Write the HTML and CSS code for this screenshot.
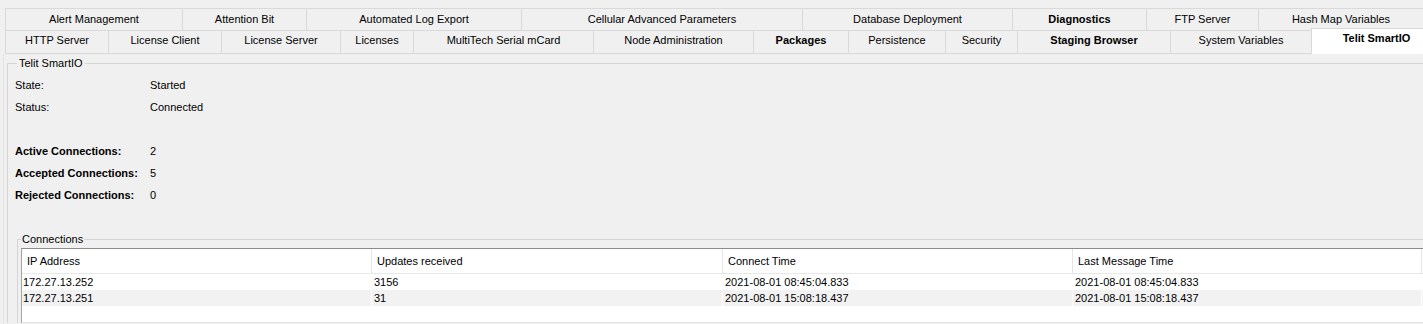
FILE: index.html
```
<!DOCTYPE html>
<html>
<head>
<meta charset="utf-8">
<link rel="stylesheet" href="styles.css">
</head>
<body>
<div class="tabs">
  <div class="tabrow row1">
    <div class="tab">Alert Management</div>
    <div class="tab">Attention Bit</div>
    <div class="tab">Automated Log Export</div>
    <div class="tab">Cellular Advanced Parameters</div>
    <div class="tab">Database Deployment</div>
    <div class="tab bold">Diagnostics</div>
    <div class="tab">FTP Server</div>
    <div class="tab">Hash Map Variables</div>
  </div>
  <div class="tabrow row2">
    <div class="tab">HTTP Server</div>
    <div class="tab">License Client</div>
    <div class="tab">License Server</div>
    <div class="tab">Licenses</div>
    <div class="tab">MultiTech Serial mCard</div>
    <div class="tab">Node Administration</div>
    <div class="tab bold">Packages</div>
    <div class="tab">Persistence</div>
    <div class="tab">Security</div>
    <div class="tab bold">Staging Browser</div>
    <div class="tab">System Variables</div>
    <div class="tab bold selected">Telit SmartIO</div>
  </div>
</div>
<div class="panel">
  <fieldset class="group main">
    <legend>Telit SmartIO</legend>
    <div class="props">
      <div class="lbl">State:</div><div class="val">Started</div>
      <div class="lbl">Status:</div><div class="val">Connected</div>
      <div class="lbl"></div><div class="val"></div>
      <div class="lbl b">Active Connections:</div><div class="val">2</div>
      <div class="lbl b">Accepted Connections:</div><div class="val">5</div>
      <div class="lbl b">Rejected Connections:</div><div class="val">0</div>
    </div>
    <fieldset class="group conns">
      <legend>Connections</legend>
      <div class="table">
        <div class="trow head">
          <div class="cell">IP Address</div>
          <div class="cell">Updates received</div>
          <div class="cell">Connect Time</div>
          <div class="cell">Last Message Time</div>
        </div>
        <div class="trow">
          <div class="cell">172.27.13.252</div>
          <div class="cell">3156</div>
          <div class="cell">2021-08-01 08:45:04.833</div>
          <div class="cell">2021-08-01 08:45:04.833</div>
        </div>
        <div class="trow alt">
          <div class="cell">172.27.13.251</div>
          <div class="cell">31</div>
          <div class="cell">2021-08-01 15:08:18.437</div>
          <div class="cell">2021-08-01 15:08:18.437</div>
        </div>
      </div>
    </fieldset>
  </fieldset>
</div>
</body>
</html>
```
FILE: styles.css
```
html, body {
  margin: 0;
  padding: 0;
  background: #f0f0f0;
  font-family: "Liberation Sans", Arial, sans-serif;
  font-size: 11px;
  color: #000;
  width: 1423px;
  height: 324px;
  overflow: hidden;
}

.tabs {
  padding: 8px 0 0 5px;
}

.tabrow {
  display: grid;
}

.row1 {
  grid-template-columns: 177px 124px 215px 281px 210px 134px 112px 1fr;
  height: 22px;
}

.row2 {
  grid-template-columns: 103px 113px 119px 73px 180px 160px 95px 97px 72px 153px 141px 1fr;
  height: 24px;
}

.tab {
  box-sizing: border-box;
  border-top: 1px solid #d9d9d9;
  border-left: 1px solid #d9d9d9;
  background: #f0f0f0;
  text-align: center;
  line-height: 20px;
  white-space: nowrap;
}

.row2 .tab {
  line-height: 19px;
  border-bottom: 1px solid #d9d9d9;
}

.tab.bold {
  font-weight: bold;
}

.tab.selected {
  background: #fff;
  margin-top: -2px;
  padding-left: 18px;
  line-height: 19px;
  border-bottom: none;
  position: relative;
  z-index: 1;
}

.panel {
  margin-left: 3px;
  border-left: 1px solid #e3e3e3;
  padding: 3px 0 0 3px;
  height: 266px;
  overflow: hidden;
}

.group {
  margin: 0;
  border: 1px solid #d5d5d5;
  border-right: none;
  border-bottom: none;
}

.group legend {
  padding: 0 2px;
  margin-left: 2px;
  line-height: 13px;
}

.conns legend {
  margin-left: 0;
  padding: 0 1px;
}

.main {
  padding: 4px 0 0 7px;
}

.props {
  display: grid;
  grid-template-columns: 135px 1fr;
  grid-auto-rows: 22px;
  line-height: 22px;
}

.lbl.b {
  font-weight: bold;
}

.conns {
  margin: 27px 0 0 2px;
  padding: 2px 0 0 3px;
}

.table {
  background: #fff;
  border-top: 1px solid #8c8c8c;
  border-left: 1px solid #a5a5a5;
  height: 73px;
  border-bottom: 2px solid #e3e3e3;
}

.trow {
  display: grid;
  grid-template-columns: 350px 351px 350px 349px;
  height: 16px;
  line-height: 16px;
}

.trow .cell {
  box-sizing: border-box;
  padding-left: 1px;
  border-right: 1px solid #fff;
  white-space: nowrap;
}

.trow .cell + .cell {
  padding-left: 2px;
}

.trow.head {
  height: 25px;
  line-height: 25px;
  border-bottom: 1px solid #e8e8e8;
  box-sizing: border-box;
}

.trow.head .cell {
  padding-left: 5px;
  border-right: 1px solid #e5e5e5;
}

.trow.head .cell + .cell {
  padding-left: 5px;
}

.trow.alt {
  background: #f2f2f2;
}
```
